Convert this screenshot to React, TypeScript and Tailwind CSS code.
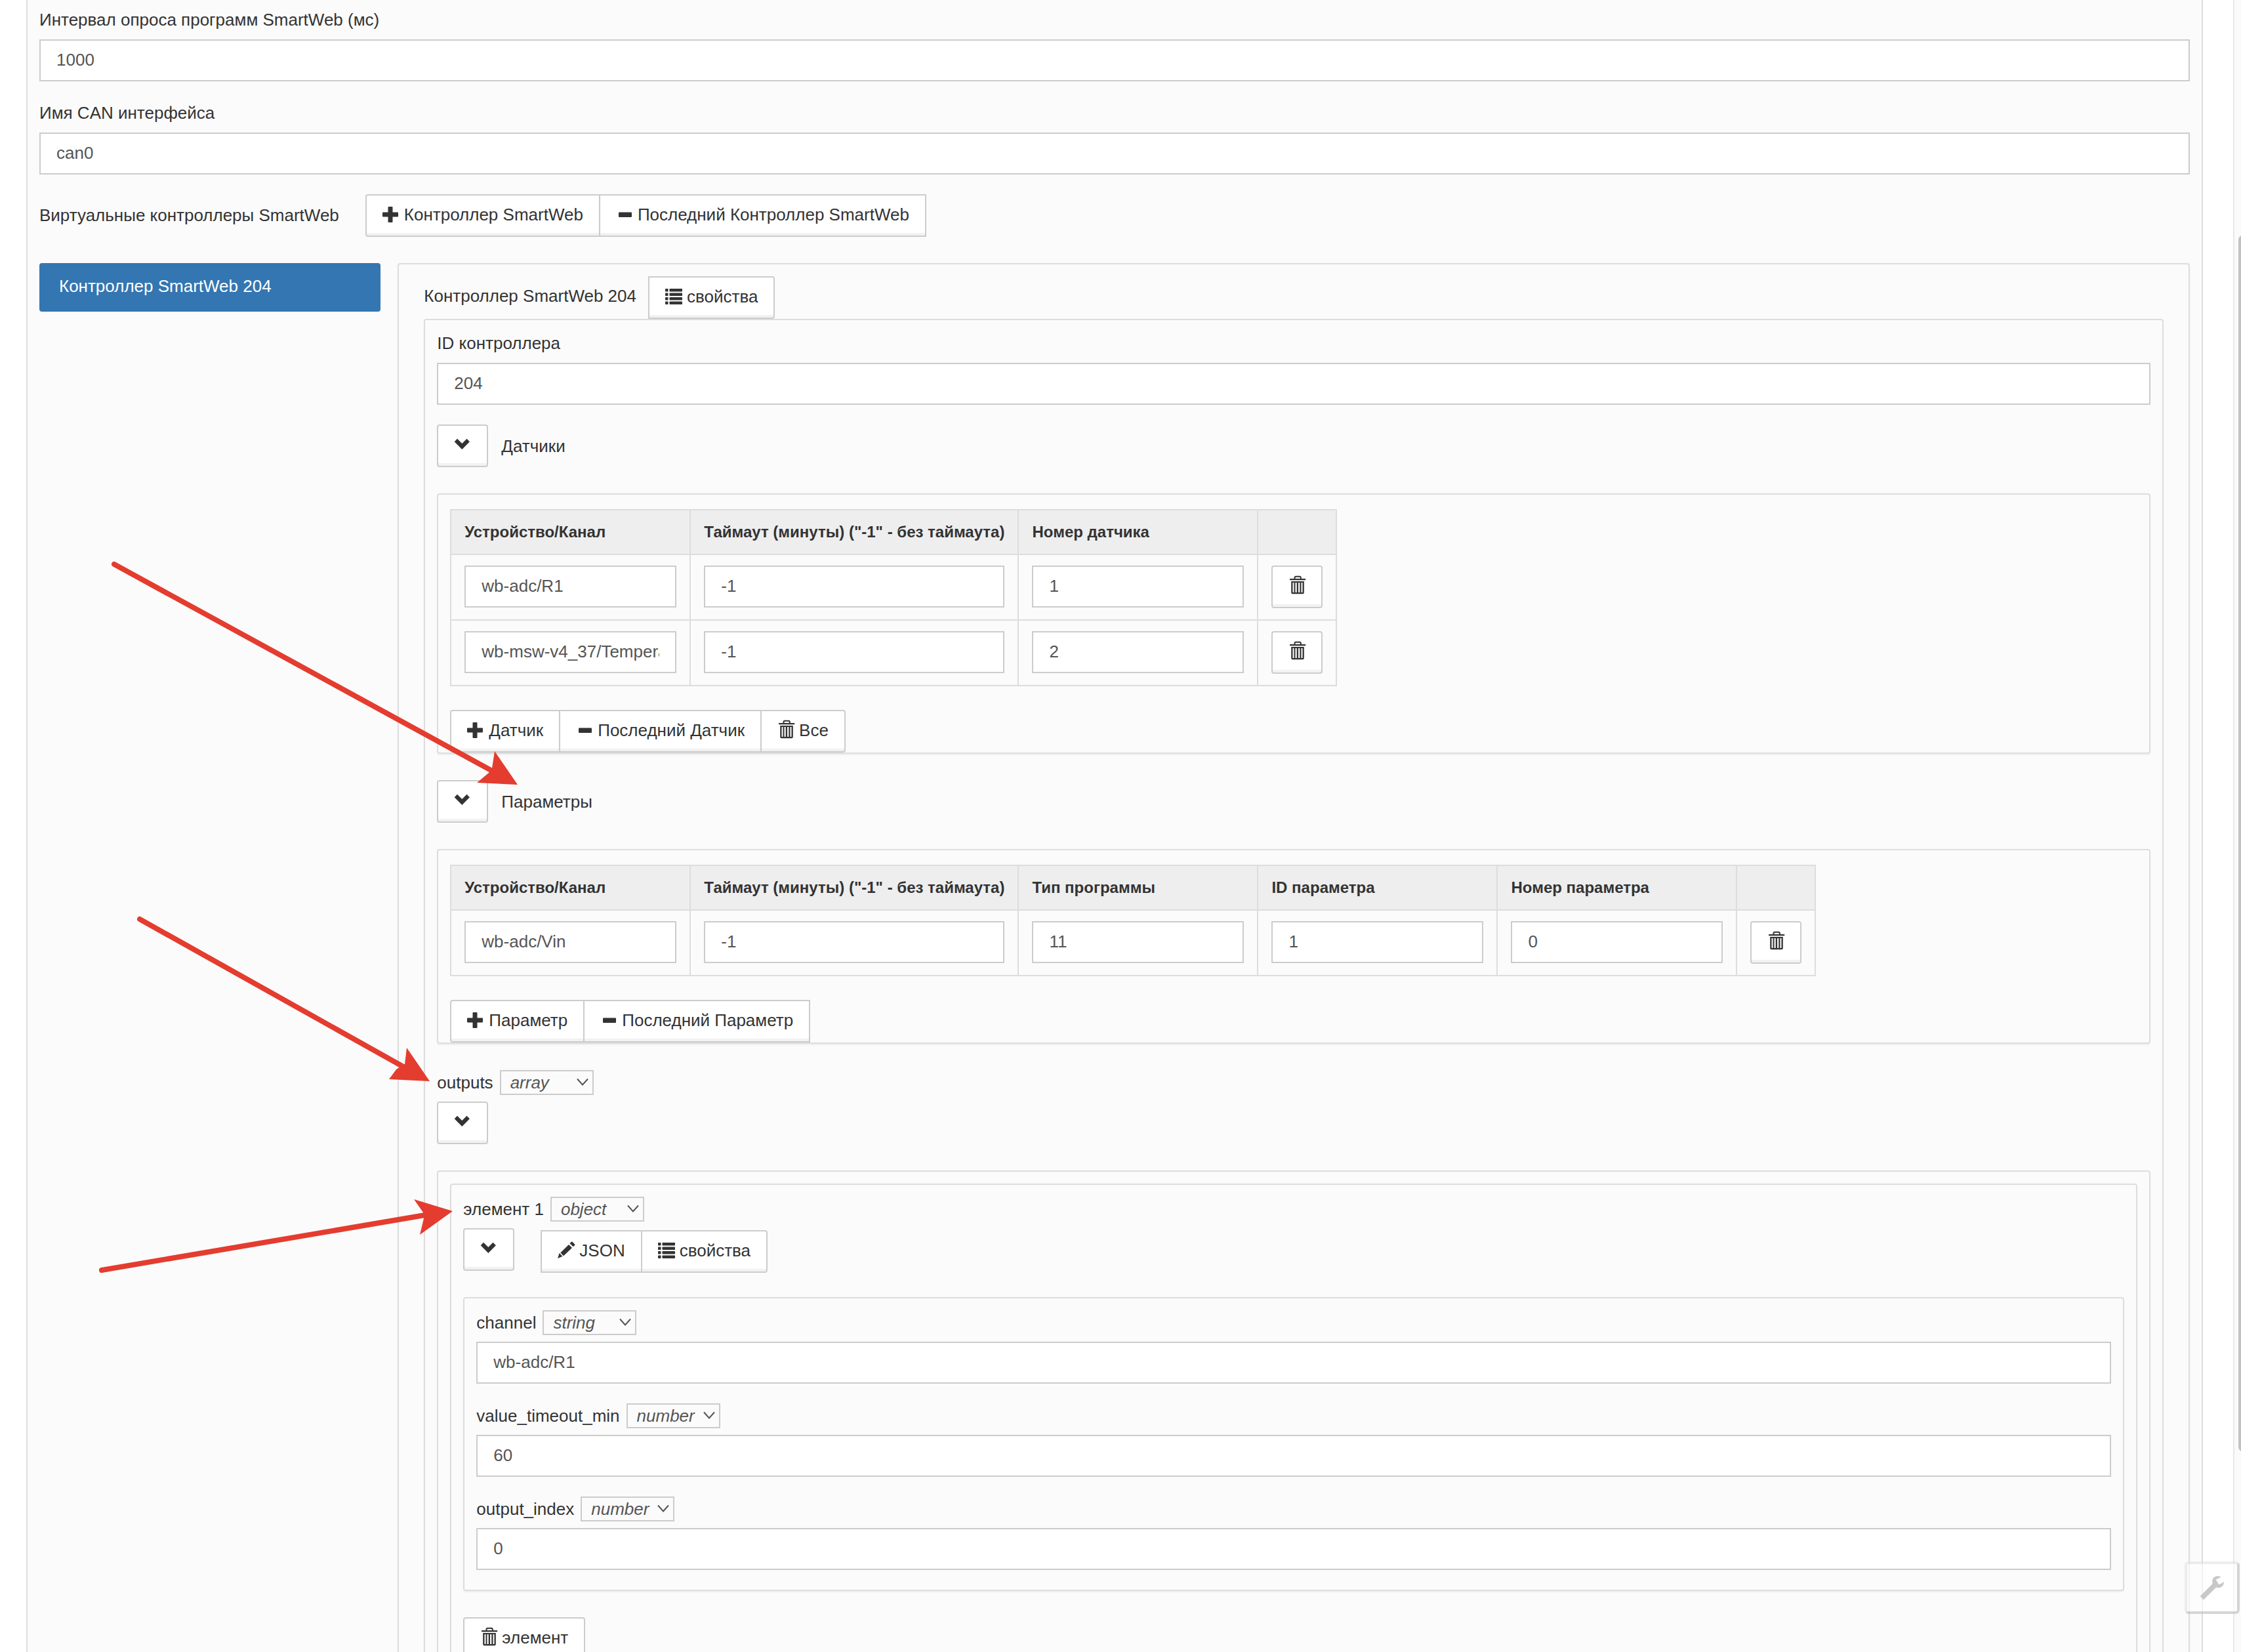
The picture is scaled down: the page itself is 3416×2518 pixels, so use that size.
import type { ReactNode } from "react";
import clsx from "clsx";

// ---------- Icons ----------
function Icon({ children }: { children: ReactNode }) {
  return (
    <svg
      className="w-[26px] h-[26px] shrink-0 overflow-visible"
      viewBox="0 0 26 26"
      fill="currentColor"
      aria-hidden="true"
    >
      {children}
    </svg>
  );
}

const PlusIcon = () => (
  <Icon>
    <path d="M9.5 1h5q1 0 1 1v7.500h7.500q1 0 1 1v5q0 1-1 1h-7.500v7.500q0 1-1 1h-5q-1 0-1-1v-7.500H1q-1 0-1-1v-5q0-1 1-1h7.500V2q0-1 1-1z" />
  </Icon>
);

const MinusIcon = () => (
  <Icon>
    <rect x="4" y="9.500" width="20" height="7.500" rx="1" />
  </Icon>
);

const ListIcon = () => (
  <Icon>
    {[1, 7.5, 14, 20.5].map((y) => (
      <g key={y}>
        <rect x="0" y={y} width="4.500" height="4.500" rx="0.800" />
        <rect x="6.500" y={y} width="19.500" height="4.500" rx="0.800" />
      </g>
    ))}
  </Icon>
);

const PencilIcon = () => (
  <Icon>
    <path d="M0 25l2.700-8L7.500 22z" />
    <path d="M4.300 16.500L17 4l5 5L9 21.300z" />
    <path d="M18.500 2.300L20.700 0q1-1 2 0l3.200 3.200q1 1 0 2l-2.200 2.100z" />
  </Icon>
);

const TrashIcon = () => (
  <Icon>
    <g transform="translate(1.500 0.500)">
      <path d="M8 2.500V0q0-1.800 1.800-1.800h5.700q1.800 0 1.800 1.800v2.500" fill="none" stroke="currentColor" strokeWidth="2" />
      <rect x="0.500" y="1.500" width="24.200" height="2.200" rx="0.500" />
      <path d="M2.700 5.500h19.600v17.200q0 2-2 2H4.700q-2 0-2-2zM5 7.500v15h2v-15zM9 7.500v15h2.200v-15zM13.600 7.500v15h2.200v-15zM18 7.500v15h2v-15z" fillRule="evenodd" />
    </g>
  </Icon>
);

const ChevronIcon = () => (
  <Icon>
    <path d="M0.700 8.300L5 3.700l7.300 7.300 7.200-7.300 4.400 4.600L12.300 20z" />
  </Icon>
);

// ---------- Controls ----------
function Button({ children, label, className }: { children: ReactNode; label?: string; className?: string }) {
  return (
    <button
      type="button"
      aria-label={label}
      className={clsx(
        "h-[65px] px-6 pb-[3px] flex items-center gap-[7px] bg-white border-2 border-[#ccc] text-[#333] whitespace-nowrap shadow-[inset_0_-4px_0_#f2f2f2] cursor-pointer",
        className
      )}
    >
      {children}
    </button>
  );
}

function CollapseButton({ label }: { label: string }) {
  return (
    <Button label={label} className="rounded-[4px] shrink-0">
      <ChevronIcon />
    </Button>
  );
}

function TextInput({ id, value, label, className }: { id?: string; value: string; label?: string; className?: string }) {
  return (
    <input
      id={id}
      type="text"
      aria-label={label}
      defaultValue={value}
      className={clsx("block h-16 px-6 pb-[2px] bg-white border-2 border-[#ccc] text-[#555] outline-none", className)}
    />
  );
}

function TypeSelect({ id, value }: { id?: string; value: string }) {
  return (
    <div className="relative">
      <select
        id={id}
        aria-label="Тип значения"
        defaultValue={value}
        className="block w-[143px] h-[38px] pl-[14px] appearance-none bg-transparent border-2 border-[#ccc] text-[#555] italic leading-[32px] outline-none"
      >
        {["string", "number", "object", "array"].map((type) => (
          <option key={type}>{type}</option>
        ))}
      </select>
      <svg
        className="absolute right-2 top-3 w-[18px] h-3 pointer-events-none"
        viewBox="0 0 18 12"
        fill="none"
        stroke="#555"
        strokeWidth="2"
        aria-hidden="true"
      >
        <path d="M1 1.500l8 9 8-9" />
      </svg>
    </div>
  );
}

function Panel({ children, className }: { children: ReactNode; className?: string }) {
  return (
    <div className={clsx("border-2 border-[#ddd] rounded-[4px] shadow-[0_2px_2px_rgba(0,0,0,0.05)]", className)}>
      {children}
    </div>
  );
}

function Field({ id, label, value }: { id: string; label: string; value: string }) {
  return (
    <div>
      <label htmlFor={id} className="block mb-[11px]">{label}</label>
      <TextInput id={id} value={value} className="w-full" />
    </div>
  );
}

function TypedField({ id, label, type, value }: { id: string; label: string; type: string; value: string }) {
  return (
    <div>
      <div className="flex items-center gap-[10px] mb-[10px]">
        <label htmlFor={id}>{label}</label>
        <TypeSelect value={type} />
      </div>
      <TextInput id={id} value={value} className="w-full" />
    </div>
  );
}

function ChannelTable({ columns, rows }: { columns: string[]; rows: string[][] }) {
  return (
    <table className="border-collapse">
      <thead>
        <tr className="bg-[#eee] text-left text-[24px] leading-[34px]">
          {columns.map((column) => (
            <th key={column} className="border-2 border-[#ddd] px-5 py-4 font-bold whitespace-nowrap">
              {column}
            </th>
          ))}
          <th className="border-2 border-[#ddd]"></th>
        </tr>
      </thead>
      <tbody>
        {rows.map((row, i) => (
          <tr key={i}>
            {row.map((value, j) => (
              <td key={j} className="border-2 border-[#ddd] px-5 pt-4 pb-[17px] align-top">
                <TextInput
                  value={value}
                  label={columns[j]}
                  className={j === 1 ? "w-full" : "w-[323px]"}
                />
              </td>
            ))}
            <td className="border-2 border-[#ddd] px-5 pt-4 pb-[17px] align-top">
              <Button label="Удалить" className="rounded-[4px]">
                <TrashIcon />
              </Button>
            </td>
          </tr>
        ))}
      </tbody>
    </table>
  );
}

function Arrows() {
  return (
    <svg
      className="absolute inset-0 w-full h-full pointer-events-none"
      fill="#e43c2f"
      stroke="#e43c2f"
      strokeLinecap="round"
      aria-hidden="true"
    >
      <path d="M174 860L752 1176M213 1401L615 1626M155 1936L648 1852" strokeWidth="8" />
      <path d="M789 1196L754 1145 750 1171 745 1178 727 1193z" stroke="none" />
      <path d="M655 1648L620 1597 617 1622 604 1630 593 1645z" stroke="none" />
      <path d="M690 1846L631 1828 645 1848 646 1857 640 1882z" stroke="none" />
    </svg>
  );
}

export default function App() {
  return (
    <div className="relative h-screen overflow-hidden flex bg-white text-[#333] text-[26px] leading-[37px] font-['Liberation_Sans',Arial,sans-serif]">
      <main className="flex-1 min-w-0 pl-10 pr-[46px]">
        <div className="h-full border-x-2 border-[#ddd] bg-[#fbfbfb] px-[18px] pt-3">
          <Field id="poll-interval" label="Интервал опроса программ SmartWeb (мс)" value="1000" />
          <div className="mt-[30px]">
            <Field id="can-name" label="Имя CAN интерфейса" value="can0" />
          </div>

          <div className="flex items-center gap-10 mt-[30px]">
            <h2>Виртуальные контроллеры SmartWeb</h2>
            <div className="flex">
              <Button className="rounded-l-[4px]">
                <PlusIcon />
                Контроллер SmartWeb
              </Button>
              <Button className="-ml-[2px]">
                <MinusIcon />
                Последний Контроллер SmartWeb
              </Button>
            </div>
          </div>

          <div className="flex mt-10">
            <nav className="w-1/6 shrink-0 pr-[26px]">
              <a href="#controller-204" className="block rounded-[4px] bg-[#3476b1] text-white px-[30px] pt-[17px] pb-5">
                Контроллер SmartWeb 204
              </a>
            </nav>

            {/* Controller details */}
            <Panel className="flex-1 min-w-0 px-[38px] pt-[18px] pb-10">
              <div id="controller-204" className="flex items-center gap-[18px]">
                <h3 className="pb-1">Контроллер SmartWeb 204</h3>
                <Button className="rounded-r-[4px]">
                  <ListIcon />
                  свойства
                </Button>
              </div>

              <Panel className="px-[18px] pt-[17px] pb-10">
                <Field id="controller-id" label="ID контроллера" value="204" />

                <div className="flex items-center gap-5 mt-[30px]">
                  <CollapseButton label="Свернуть датчики" />
                  <h4 className="pt-[2px]">Датчики</h4>
                </div>
                <Panel className="mt-10 px-[18px] pt-[22px]">
                  <ChannelTable
                    columns={["Устройство/Канал", 'Таймаут (минуты) ("-1" - без таймаута)', "Номер датчика"]}
                    rows={[
                      ["wb-adc/R1", "-1", "1"],
                      ["wb-msw-v4_37/Temperature", "-1", "2"],
                    ]}
                  />
                  <div className="flex mt-9">
                    <Button className="rounded-l-[4px]">
                      <PlusIcon />
                      Датчик
                    </Button>
                    <Button className="-ml-[2px]">
                      <MinusIcon />
                      Последний Датчик
                    </Button>
                    <Button className="-ml-[2px] rounded-r-[4px]">
                      <TrashIcon />
                      Все
                    </Button>
                  </div>
                </Panel>

                <div className="flex items-center gap-5 mt-10">
                  <CollapseButton label="Свернуть параметры" />
                  <h4 className="pt-[2px]">Параметры</h4>
                </div>
                <Panel className="mt-10 px-[18px] pt-[22px]">
                  <ChannelTable
                    columns={[
                      "Устройство/Канал",
                      'Таймаут (минуты) ("-1" - без таймаута)',
                      "Тип программы",
                      "ID параметра",
                      "Номер параметра",
                    ]}
                    rows={[["wb-adc/Vin", "-1", "11", "1", "0"]]}
                  />
                  <div className="flex mt-9">
                    <Button className="rounded-l-[4px]">
                      <PlusIcon />
                      Параметр
                    </Button>
                    <Button className="-ml-[2px]">
                      <MinusIcon />
                      Последний Параметр
                    </Button>
                  </div>
                </Panel>

                {/* Outputs */}
                <div className="flex items-center gap-[10px] mt-10">
                  <label htmlFor="outputs-type">outputs</label>
                  <TypeSelect id="outputs-type" value="array" />
                </div>
                <div className="mt-[10px]">
                  <CollapseButton label="Свернуть outputs" />
                </div>
                <Panel className="mt-10 p-[18px]">
                  <Panel className="p-[18px]">
                    <div className="flex items-center gap-[10px]">
                      <label htmlFor="item-type">элемент 1</label>
                      <TypeSelect id="item-type" value="object" />
                    </div>
                    <div className="flex items-start gap-10 mt-[10px]">
                      <CollapseButton label="Свернуть элемент 1" />
                      <div className="flex pt-[3px]">
                        <Button>
                          <PencilIcon />
                          JSON
                        </Button>
                        <Button className="-ml-[2px] rounded-r-[4px]">
                          <ListIcon />
                          свойства
                        </Button>
                      </div>
                    </div>

                    <Panel className="flex flex-col gap-[30px] mt-[37px] px-[18px] pt-[18px] pb-[30px]">
                      <TypedField id="channel" label="channel" type="string" value="wb-adc/R1" />
                      <TypedField id="value-timeout" label="value_timeout_min" type="number" value="60" />
                      <TypedField id="output-index" label="output_index" type="number" value="0" />
                    </Panel>
                    <div className="flex mt-10">
                      <Button className="rounded-[4px]">
                        <TrashIcon />
                        элемент
                      </Button>
                    </div>
                  </Panel>
                </Panel>
              </Panel>
            </Panel>
          </div>
        </div>
      </main>

      {/* Scrollbar */}
      <aside className="relative w-3 shrink-0 overflow-hidden bg-[#fafafa] border-l-2 border-[#e8e8e8]">
        <div className="absolute left-[6px] top-[14.2%] w-4 h-[73.7%] rounded-full bg-[#c2c2c2]" />
      </aside>

      <Arrows />

      <button
        type="button"
        aria-label="Настройки"
        className="absolute right-[2px] bottom-[58px] w-[84px] h-20 flex items-center justify-center rounded-[6px] border-4 border-t-black/7 border-l-black/7 border-r-black/16 border-b-black/16 bg-white/60 text-[#c8c8c8] cursor-pointer"
      >
        <svg className="w-9 h-9" viewBox="0 0 36 36" fill="currentColor" aria-hidden="true">
          <path d="M31.700 1.700C27.500-.8 22-.3 19.300 4 18 6.500 17.900 9 18.700 12L.5 30q-1 1 0 2L4 35.500q1 1 2 0L24 17.600C30.500 19.500 36 16 36 9.300l-7.700 4-4.600-7.600z" />
        </svg>
      </button>
    </div>
  );
}
